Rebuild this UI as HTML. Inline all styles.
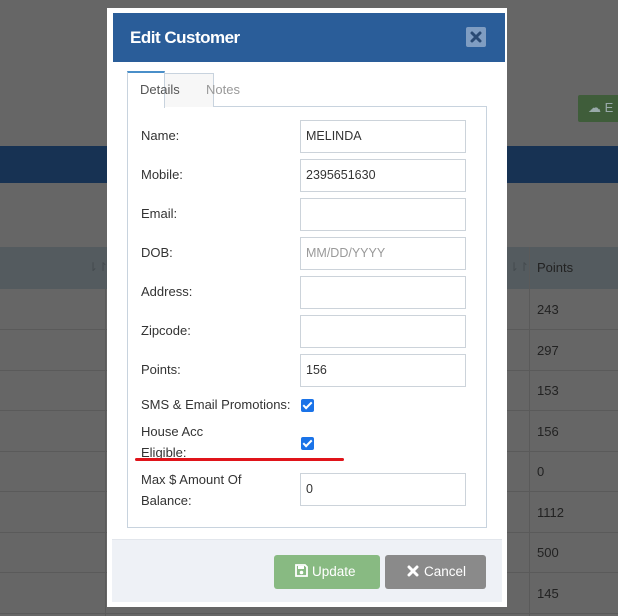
<!DOCTYPE html><html><head><style>
*{box-sizing:border-box;margin:0;padding:0}
body{width:618px;height:616px;background:#666;position:relative;overflow:hidden;font-family:"Liberation Sans",sans-serif;font-size:13px;color:#333}
.abs{position:absolute}
.hl{position:absolute;left:0;width:618px;height:1px;background:#5a5a5a}
.lbl{position:absolute;left:141px;color:#333;font-size:13px}
.inp{position:absolute;left:300px;width:166px;height:33px;border:1px solid #ccd3da;background:#fff;font-size:12.5px;padding:8px 5px;color:#333}
.cb{position:absolute;left:301px;width:13px;height:13px;background:#1a73e8;border-radius:2px}
.cb:after{content:"";position:absolute;left:4px;top:1px;width:3px;height:7px;border:solid #fff;border-width:0 2px 2px 0;transform:rotate(45deg)}
.num{position:absolute;left:537px;font-size:13px;color:#222}
</style></head><body>
<div class="abs" style="left:0;top:146px;width:618px;height:37px;background:#173253"></div>
<div class="abs" style="left:0;top:247px;width:618px;height:42px;background:#545b5f"></div>
<div class="abs" style="left:529px;top:247px;width:1px;height:369px;background:#5a5a5a"></div>
<div class="abs" style="left:105px;top:289px;width:1px;height:327px;background:#5a5a5a"></div>
<div class="hl" style="top:329px"></div><div class="hl" style="top:370px"></div><div class="hl" style="top:410px"></div><div class="hl" style="top:451px"></div><div class="hl" style="top:491px"></div><div class="hl" style="top:532px"></div><div class="hl" style="top:572px"></div><div class="hl" style="top:613px"></div>
<div class="abs" style="left:88px;top:260px;color:#454b4f;font-size:12px">⇂↾</div>
<div class="abs" style="left:509px;top:260px;color:#454b4f;font-size:12px">⇂↾</div>
<div class="num" style="top:260px">Points</div>
<div class="num" style="top:302px">243</div><div class="num" style="top:343px">297</div><div class="num" style="top:383px">153</div><div class="num" style="top:424px">156</div><div class="num" style="top:464px">0</div><div class="num" style="top:505px">1112</div><div class="num" style="top:545px">500</div><div class="num" style="top:586px">145</div>
<div class="abs" style="left:578px;top:95px;width:50px;height:27px;background:#3f5d3a;border-radius:2px;color:#9aa;padding:5px 10px;font-size:13px">☁ E</div>

<div class="abs" style="left:107px;top:8px;width:400px;height:599px;background:#fff"></div>
<div class="abs" style="left:113px;top:13px;width:392px;height:49px;background:#2a5d99"></div>
<div class="abs" style="left:130px;top:28px;color:#fff;font-weight:bold;font-size:17px;letter-spacing:-0.5px">Edit Customer</div>
<div class="abs" style="left:466px;top:27px;width:20px;height:20px;background:#7f9dc2;border-radius:2px">
<svg width="20" height="20" viewBox="0 0 20 20"><path d="M6 6L14 14M14 6L6 14" stroke="#2a4a73" stroke-width="3" stroke-linecap="round"/></svg></div>

<div class="abs" style="left:127px;top:106px;width:360px;height:422px;border:1px solid #c8d3de"></div>
<div class="abs" style="left:164px;top:73px;width:50px;height:34px;background:#f7f7f7;border:1px solid #c8d3de;border-bottom:none"></div>
<div class="abs" style="left:206px;top:82px;color:#999">Notes</div>
<div class="abs" style="left:127px;top:71px;width:38px;height:37px;background:#fff;border:1px solid #c8d3de;border-top:2px solid #4a8fc9;border-bottom:none"></div>
<div class="abs" style="left:140px;top:82px;color:#555">Details</div>

<div class="lbl" style="top:128px">Name:</div><div class="inp" style="top:120px">MELINDA</div>
<div class="lbl" style="top:167px">Mobile:</div><div class="inp" style="top:159px">2395651630</div>
<div class="lbl" style="top:206px">Email:</div><div class="inp" style="top:198px"></div>
<div class="lbl" style="top:245px">DOB:</div><div class="inp" style="top:237px;color:#999">MM/DD/YYYY</div>
<div class="lbl" style="top:284px">Address:</div><div class="inp" style="top:276px"></div>
<div class="lbl" style="top:323px">Zipcode:</div><div class="inp" style="top:315px"></div>
<div class="lbl" style="top:362px">Points:</div><div class="inp" style="top:354px">156</div>
<div class="lbl" style="top:397px">SMS &amp; Email Promotions:</div><div class="cb" style="top:399px"></div>
<div class="lbl" style="top:421px;line-height:21px">House Acc<br>Eligible:</div><div class="cb" style="top:437px"></div>
<div class="abs" style="left:135px;top:458px;width:209px;height:3px;background:#e0141a;border-radius:2px"></div>
<div class="lbl" style="top:469px;line-height:21px">Max $ Amount Of<br>Balance:</div><div class="inp" style="top:473px">0</div>

<div class="abs" style="left:112px;top:539px;width:390px;height:63px;background:#eef1f6;border-top:1px solid #e2e6ec"></div>
<div class="abs" style="left:274px;top:555px;width:106px;height:34px;background:#88ba82;border-radius:3px;color:#fff;font-size:13.5px;padding:9px 0 0 21px">
<svg width="13" height="13" viewBox="0 0 13 13" style="vertical-align:-1px;margin-right:4px"><path d="M1 1H10L12 3V12H1Z" fill="none" stroke="#fff" stroke-width="1.8"/><rect x="3" y="2" width="6" height="3" fill="#fff"/><circle cx="6.5" cy="8.5" r="1.8" fill="#fff"/></svg>Update</div>
<div class="abs" style="left:385px;top:555px;width:101px;height:34px;background:#8a8a8a;border-radius:3px;color:#fff;font-size:13.5px;padding:9px 0 0 22px">
<svg width="12" height="12" viewBox="0 0 12 12" style="vertical-align:-1px;margin-right:5px"><path d="M2 2L10 10M10 2L2 10" stroke="#fff" stroke-width="3" stroke-linecap="round"/></svg>Cancel</div>
</body></html>
